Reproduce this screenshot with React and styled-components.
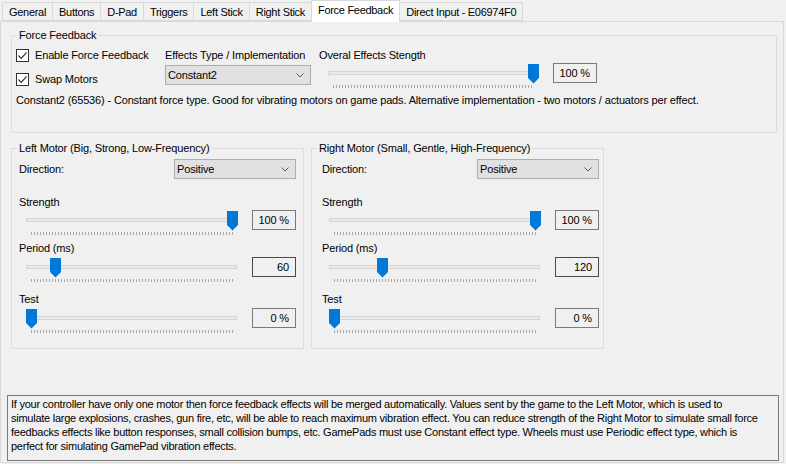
import React from 'react'
import styled, { createGlobalStyle } from 'styled-components'

const GlobalStyle = createGlobalStyle`
  html, body {
    margin: 0;
    padding: 0;
    background: #f0f0f0;
  }
  body {
    font-family: "Liberation Sans", Arial, sans-serif;
    font-size: 11px;
    color: #000;
  }
`

const Window = styled.div`
  width: 786px;
  height: 464px;
  display: flex;
  flex-direction: column;
  background: #f0f0f0;
  letter-spacing: -0.15px;
  overflow: hidden;
`

const TabStrip = styled.div`
  display: flex;
  align-items: flex-end;
  height: 21px;
  padding-left: 2px;
  position: relative;
  z-index: 1;
  letter-spacing: -0.3px;
`

const Tab = styled.div`
  box-sizing: border-box;
  height: ${p => (p.$active ? 22 : 19)}px;
  margin-bottom: ${p => (p.$active ? -1 : 0)}px;
  margin-right: -1px;
  padding: ${p => (p.$active ? '2px 6px 0' : '2px 6px 0')};
  border: 1px solid #d9d9d9;
  border-bottom: ${p => (p.$active ? 'none' : '1px solid #d9d9d9')};
  background: ${p => (p.$active ? '#fff' : '#f0f0f0')};
  line-height: 14px;
  white-space: nowrap;
`

const TabPage = styled.div`
  flex: 1;
  margin: 0 2px 1px 0;
  border: 1px solid #d9d9d9;
  background: #f0f0f0;
  display: flex;
  flex-direction: column;
  align-items: flex-start;
`

const GroupBox = styled.fieldset`
  box-sizing: border-box;
  width: ${p => p.$w}px;
  height: ${p => p.$h}px;
  margin: 0;
  padding: 0;
  min-width: 0;
  border: 1px solid #dcdcdc;
`

const Legend = styled.legend`
  margin-left: 5px;
  padding: 0 2px;
  line-height: 14px;
`

const FFGroup = styled(GroupBox)`
  margin: 6px 0 0 10px;
`

const FFBody = styled.div`
  padding: 6px 0 0 4px;
`

const TopGrid = styled.div`
  display: grid;
  grid-template-columns: 149px 154px 1fr;
  align-items: start;
`

const Column = styled.div`
  display: flex;
  flex-direction: column;
  align-items: flex-start;
  gap: ${p => p.$gap}px;
`

const CheckRow = styled.label`
  display: flex;
  align-items: center;
  height: 14px;
  line-height: 14px;
`

const CheckBox = styled.span`
  box-sizing: border-box;
  width: 13px;
  height: 13px;
  margin-right: 6px;
  border: 1px solid #333;
  background: #fff;
  display: flex;
  align-items: center;
  justify-content: center;
`

const Text = styled.div`
  line-height: 14px;
  margin-top: ${p => p.$mt || 0}px;
  white-space: nowrap;
`

const Select = styled.div`
  box-sizing: border-box;
  width: ${p => p.$w}px;
  height: 20px;
  padding: 0 6px 0 2px;
  border: 1px solid #adadad;
  background: #e1e1e1;
  display: flex;
  align-items: center;
  justify-content: space-between;
`

const SliderRow = styled.div`
  display: flex;
  align-items: flex-start;
  justify-content: ${p => (p.$spread ? 'space-between' : 'flex-start')};
  gap: 9px;
  margin-top: ${p => p.$mt || 0}px;
  width: ${p => (p.$spread ? '100%' : 'auto')};
`

const SliderBox = styled.div`
  position: relative;
  width: ${p => p.$w}px;
  height: 26px;
  margin-left: ${p => p.$ml || 0}px;
  flex: none;
`

const Track = styled.div`
  position: absolute;
  top: 8px;
  left: 6px;
  right: 6px;
  height: 4px;
  box-sizing: border-box;
  border: 1px solid #d6d6d6;
  background: #e7eaea;
`

const Ticks = styled.div`
  position: absolute;
  top: 22px;
  left: 11px;
  right: 10px;
  height: 3px;
  background: repeating-linear-gradient(to right, #a8a8a8 0 1px, transparent 1px 3px);
`

const Thumb = styled.svg`
  position: absolute;
  top: 1px;
  width: 11px;
  height: 20px;
`

const ValueBox = styled.div`
  box-sizing: border-box;
  width: 44px;
  height: 20px;
  flex: none;
  padding-right: 6px;
  border: 1px solid ${p => (p.$dark ? '#4a4a4a' : '#7a7a7a')};
  background: #f0f0f0;
  text-align: right;
  line-height: 18px;
`

const MotorRow = styled.div`
  display: flex;
  gap: 7px;
  margin: 8px 0 0 10px;
`

const MotorBody = styled.div`
  padding: 4px ${p => p.$pr}px 0 ${p => p.$pl}px;
  display: flex;
  flex-direction: column;
  align-items: flex-start;
`

const DirectionRow = styled.div`
  width: 100%;
  height: 20px;
  display: flex;
  align-items: center;
  justify-content: space-between;
`

const InfoBox = styled.div`
  box-sizing: border-box;
  width: 772px;
  height: 66px;
  margin: 46px 0 0 6px;
  padding: 1px 3px;
  border: 1px solid #7a7a7a;
  background: #f0f0f0;
  line-height: 14px;
  letter-spacing: -0.25px;
  white-space: nowrap;
  overflow: hidden;
`

const Chevron = () => (
  <svg width="8" height="5" viewBox="0 0 8 5">
    <path d="M0.5 0.5 L4 4 L7.5 0.5" fill="none" stroke="#5a5a5a" strokeWidth="1" />
  </svg>
)

const Check = () => (
  <svg width="11" height="11" viewBox="0 0 11 11">
    <path d="M1.5 5.5 L4.2 8.3 L9.6 2.4" fill="none" stroke="#333" strokeWidth="1.2" />
  </svg>
)

const Slider = ({ width, value, ml }) => {
  const span = width - 22
  const left = 11 + value * span - 5.5
  return (
    <SliderBox $w={width} $ml={ml}>
      <Track />
      <Ticks />
      <Thumb viewBox="0 0 11 20" style={{ left }}>
        <polygon points="0,0 11,0 11,14 5.5,19.5 0,14" fill="#0078d7" />
      </Thumb>
    </SliderBox>
  )
}

const tabs = ['General', 'Buttons', 'D-Pad', 'Triggers', 'Left Stick', 'Right Stick', 'Force Feedback', 'Direct Input - E06974F0']

const motors = [
  { title: 'Left Motor (Big, Strong, Low-Frequency)', pl: 7, pr: 7, strength: 1, period: 60 },
  { title: 'Right Motor (Small, Gentle, High-Frequency)', pl: 10, pr: 4, strength: 1, period: 120 },
]

const MotorGroup = ({ m }) => (
  <GroupBox $w={293} $h={208}>
    <Legend>{m.title}</Legend>
    <MotorBody $pl={m.pl} $pr={m.pr}>
      <DirectionRow>
        <Text>Direction:</Text>
        <Select $w={122}>
          <span>Positive</span>
          <Chevron />
        </Select>
      </DirectionRow>
      <Text $mt={16}>Strength</Text>
      <SliderRow $spread $mt={1}>
        <Slider width={223} value={m.strength} ml={1} />
        <ValueBox>100 %</ValueBox>
      </SliderRow>
      <Text $mt={5}>Period (ms)</Text>
      <SliderRow $spread $mt={2}>
        <Slider width={223} value={m.period / 500} ml={1} />
        <ValueBox $dark>{m.period}</ValueBox>
      </SliderRow>
      <Text $mt={9}>Test</Text>
      <SliderRow $spread $mt={2}>
        <Slider width={223} value={0} ml={1} />
        <ValueBox>0 %</ValueBox>
      </SliderRow>
    </MotorBody>
  </GroupBox>
)

export default function App() {
  return (
    <Window>
      <GlobalStyle />
      <TabStrip>
        {tabs.map(t => (
          <Tab key={t} $active={t === 'Force Feedback'}>{t}</Tab>
        ))}
      </TabStrip>
      <TabPage>
        <FFGroup $w={766} $h={105}>
          <Legend>Force Feedback</Legend>
          <FFBody>
            <TopGrid>
              <Column $gap={10}>
                <CheckRow><CheckBox><Check /></CheckBox>Enable Force Feedback</CheckRow>
                <CheckRow><CheckBox><Check /></CheckBox>Swap Motors</CheckRow>
              </Column>
              <Column $gap={3}>
                <Text>Effects Type / Implementation</Text>
                <Select $w={146}>
                  <span>Constant2</span>
                  <Chevron />
                </Select>
              </Column>
              <Column $gap={1}>
                <Text>Overal Effects Stength</Text>
                <SliderRow>
                  <Slider width={222} value={1} ml={3} />
                  <ValueBox>100 %</ValueBox>
                </SliderRow>
              </Column>
            </TopGrid>
            <Text $mt={4}>
              Constant2 (65536) - Constant force type. Good for vibrating motors on game pads. Alternative implementation - two motors / actuators per effect.
            </Text>
          </FFBody>
        </FFGroup>
        <MotorRow>
          {motors.map(m => <MotorGroup key={m.title} m={m} />)}
        </MotorRow>
        <InfoBox>
          If your controller have only one motor then force feedback effects will be merged automatically. Values sent by the game to the Left Motor, which is used to<br />
          simulate large explosions, crashes, gun fire, etc, will be able to reach maximum vibration effect. You can reduce strength of the Right Motor to simulate small force<br />
          feedbacks effects like button responses, small collision bumps, etc. GamePads must use Constant effect type. Wheels must use Periodic effect type, which is<br />
          perfect for simulating GamePad vibration effects.
        </InfoBox>
      </TabPage>
    </Window>
  )
}
